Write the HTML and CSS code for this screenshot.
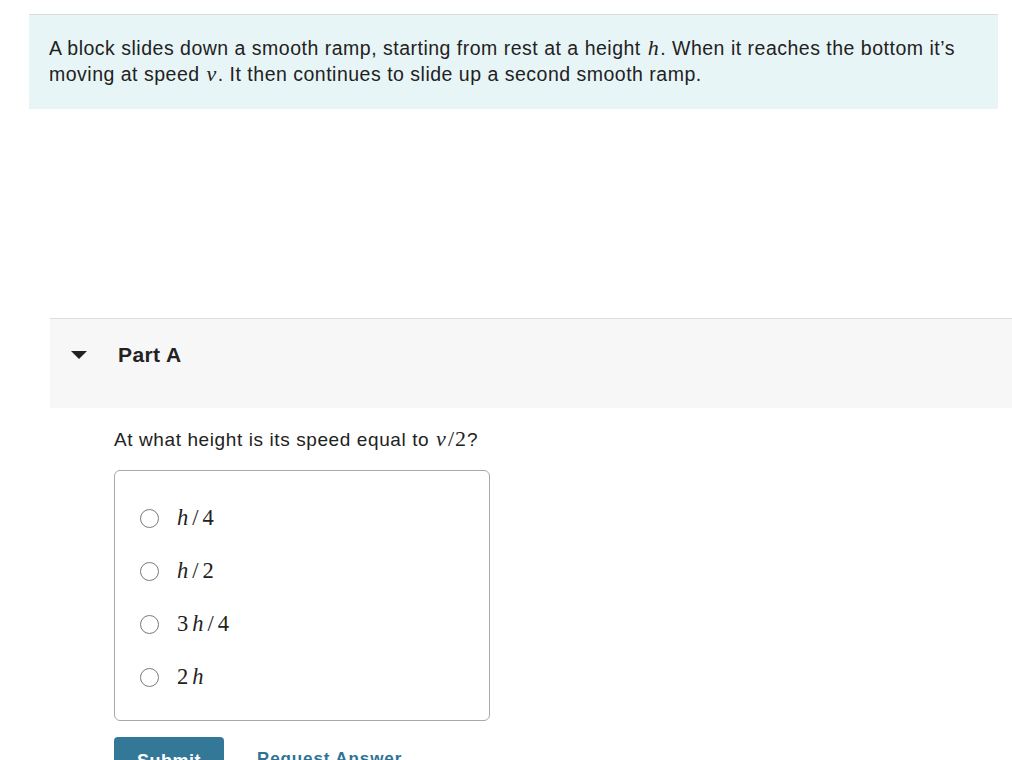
FILE: index.html
```html
<!DOCTYPE html>
<html>
<head>
<meta charset="utf-8">
<link rel="stylesheet" href="styles.css">
</head>
<body>
<div class="intro">
  <p>A block slides down a smooth ramp, starting from rest at a height <span class="mi">h</span>. When it reaches the bottom it’s moving at speed <span class="mi">v</span>. It then continues to slide up a second smooth ramp.</p>
</div>
<div class="part">
  <div class="part-head">
    <svg class="caret" width="16" height="8" viewBox="0 0 16 8"><path d="M0 0 H16 L8 8 Z" fill="#222"/></svg>
    <span class="part-title">Part A</span>
  </div>
  <div class="part-body">
    <p class="question">At what height is its speed equal to <span class="math"><span class="mi">v</span>/2</span>?</p>
    <div class="options">
      <label class="opt"><span class="radio"></span><span class="math"><span class="mi">h</span>/4</span></label>
      <label class="opt"><span class="radio"></span><span class="math"><span class="mi">h</span>/2</span></label>
      <label class="opt"><span class="radio"></span><span class="math">3<span class="mi">h</span>/4</span></label>
      <label class="opt"><span class="radio"></span><span class="math">2<span class="mi">h</span></span></label>
    </div>
    <div class="actions">
      <button class="submit">Submit</button>
      <a class="request">Request Answer</a>
    </div>
  </div>
</div>
</body>
</html>
```
FILE: styles.css
```css
html, body { margin: 0; padding: 0; background: #fff; }
body {
  font-family: "Liberation Sans", Arial, sans-serif;
  color: #222;
  overflow: hidden;
  width: 1012px;
  height: 760px;
}
.intro {
  margin: 14px 0 0 29px;
  width: 969px;
  box-sizing: border-box;
  border-top: 1px solid #dcdcdc;
  background: #e8f5f7;
  padding: 20px 20px 22px 20px;
}
.intro p {
  margin: 0;
  font-size: 19.5px;
  letter-spacing: 0.5px;
  line-height: 26px;
}
.mi {
  font-family: "Liberation Serif", "Times New Roman", serif;
  font-style: italic;
  font-size: 22px;
  line-height: 1;
  padding: 0 1px;
}
.math {
  font-family: "Liberation Serif", "Times New Roman", serif;
  font-size: 22px;
  line-height: 1;
  letter-spacing: 1px;
}
.part {
  margin: 209px 0 0 50px;
}
.part-head {
  height: 89px;
  border-top: 1px solid #dcdcdc;
  background: #f7f7f7;
  display: flex;
  align-items: flex-start;
  padding-left: 21px;
  width: 1000px;
}
.caret { display: block; margin-top: 32px; }
.part-title {
  font-weight: bold;
  font-size: 21px;
  letter-spacing: 0.4px;
  margin-left: 31px;
  margin-top: 24px;
}
.part-body {
  padding-left: 64px;
}
.question {
  margin: 19px 0 0 0;
  font-size: 19px;
  letter-spacing: 0.6px;
  line-height: 26px;
}
.options {
  margin-top: 17px;
  width: 376px;
  height: 251px;
  box-sizing: border-box;
  border: 1px solid #a8a8a8;
  border-radius: 6px;
  padding: 32px 0 0 25px;
  display: flex;
  flex-direction: column;
  gap: 23px;
}
.opt {
  display: flex;
  align-items: center;
  height: 30px;
}
.radio {
  width: 17px;
  height: 17px;
  border: 1.5px solid #7a7a7a;
  border-radius: 50%;
  margin-right: 18px;
  box-sizing: content-box;
}
.opt .math { font-size: 22.5px; letter-spacing: 4px; }
.opt .mi { font-size: 22.5px; padding: 0; }
.actions {
  margin-top: 16px;
  display: flex;
  align-items: flex-start;
}
.submit {
  width: 110px;
  height: 40px;
  box-sizing: border-box;
  border: none;
  border-radius: 4px;
  background: #347898;
  color: #fff;
  font-family: "Liberation Sans", Arial, sans-serif;
  font-size: 18px;
  font-weight: bold;
  letter-spacing: 0.5px;
  padding: 8px 0 0 0;
}
.request {
  margin: 12px 0 0 33px;
  color: #2e7396;
  font-size: 17px;
  font-weight: bold;
  letter-spacing: 0.9px;
}
```
